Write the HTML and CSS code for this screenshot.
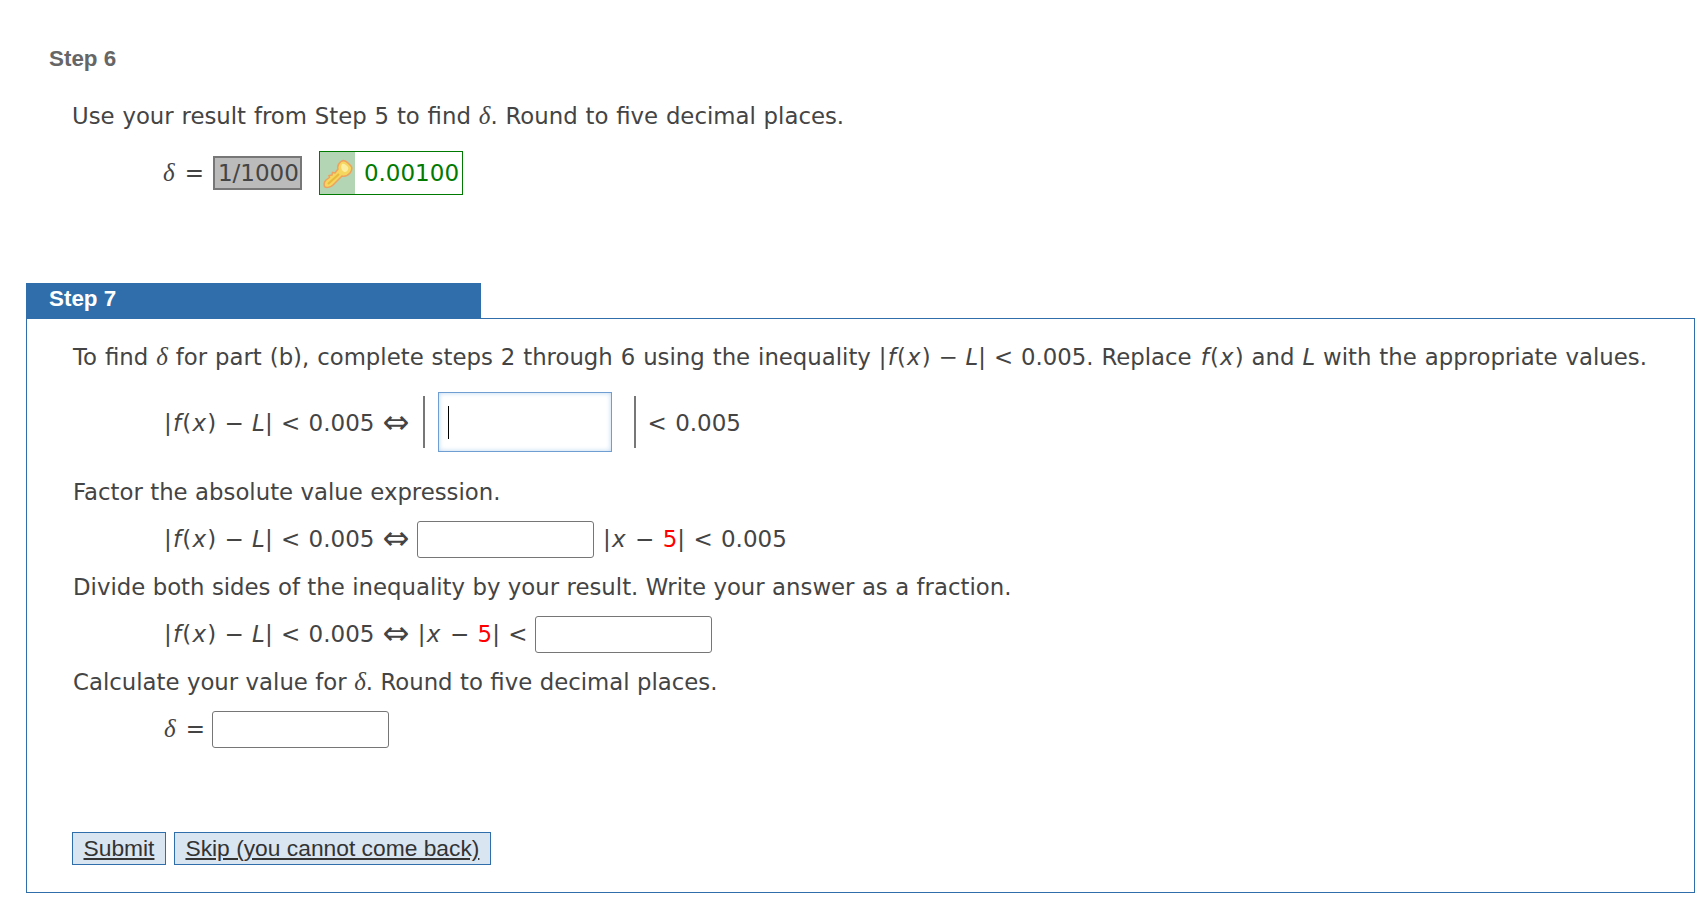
FILE: index.html
```html
<!DOCTYPE html>
<html lang="en">
<head>
    <meta charset="UTF-8">
    <title>Step 7</title>
    <link rel="stylesheet" href="styles.css">
</head>
<body>
    <section class="past-step">
        <div class="step-title">Step 6</div>
        <p class="text wide">Use your result from Step 5 to find <i class="greek">&delta;</i>. Round to five decimal places.</p>
        <div class="math-row answer-row">
            <i class="greek">&delta;</i><span class="eq">=</span>
            <span class="given">1/1000</span>
            <span class="key-box">
                <span class="key-cell">
                    <svg width="31" height="31" viewBox="0 0 31 31">
                        <path d="M19 3.500C21 2 24 3 26 5L29 8C30.500 10 29.500 13 28 15C26 17.500 22.500 18.500 20 18L11 27C9 29 5 30 3 29C1.500 27.500 2 24 4 22L7.500 19.500L7 17.500L10 17L10.500 14.500L13 15L16 11C15 8 16.500 5.500 19 3.500Z" fill="#f5d65e" stroke="#eda35e" stroke-width="1.500"/>
                        <path d="M20 6C22 5 24 7 26 9C27 11 25 14 23 14C20 14 18 9 20 6Z" fill="#fbeea0"/>
                        <path d="M17 16L6 26" fill="none" stroke="#e8b93a" stroke-width="2"/>
                    </svg>
                </span>
                <span class="key-value">0.00100</span>
            </span>
        </div>
    </section>

    <div class="step-tab">Step 7</div>
    <section class="panel">
        <p class="text wider">To find <i class="greek">&delta;</i> for part (b), complete steps 2 through 6 using the inequality |<i class="var">f</i>(<i class="var">x</i>) &minus; <i>L</i>| &lt; 0.005. Replace <i class="var">f</i>(<i class="var">x</i>) and <i>L</i> with the appropriate values.</p>

        <div class="math-row big-row">
            <span class="big-text">|<i class="var">f</i>(<i class="var">x</i>) &minus; <i>L</i>| &lt; 0.005 <span class="arrow">&hArr;</span></span>
            <span class="abs-bar bar-left"></span>
            <span class="focus-wrap">
                <input class="blank focused" type="text">
                <span class="caret"></span>
            </span>
            <span class="abs-bar bar-right"></span>
            <span class="big-text">&lt; 0.005</span>
        </div>

        <p class="text">Factor the absolute value expression.</p>
        <div class="math-row">
            <span>|<i class="var">f</i>(<i class="var">x</i>) &minus; <i>L</i>| &lt; 0.005 <span class="arrow">&hArr;</span></span>
            <input class="blank" type="text">
            <span>|<i class="var">x</i> &minus; <span class="red">5</span>| &lt; 0.005</span>
        </div>

        <p class="text">Divide both sides of the inequality by your result. Write your answer as a fraction.</p>
        <div class="math-row">
            <span>|<i class="var">f</i>(<i class="var">x</i>) &minus; <i>L</i>| &lt; 0.005 <span class="arrow">&hArr;</span> |<i class="var">x</i> &minus; <span class="red">5</span>| &lt;</span>
            <input class="blank" type="text">
        </div>

        <p class="text">Calculate your value for <i class="greek">&delta;</i>. Round to five decimal places.</p>
        <div class="math-row">
            <i class="greek">&delta;</i><span class="eq">=</span>
            <input class="blank" type="text">
        </div>

        <div class="buttons">
            <button class="btn" type="button">Submit</button>
            <button class="btn" type="button">Skip (you cannot come back)</button>
        </div>
    </section>
</body>
</html>
```

FILE: styles.css
```css
body {
    margin: 0;
    background-color: #fff;
    color: #444;
    font-family: "DejaVu Sans", sans-serif;
    font-size: 23px;
}

.past-step {
    padding: 42px 0 0 49px;
    height: 283px;
    box-sizing: border-box;
}

.step-title {
    font-family: "Liberation Sans", sans-serif;
    font-weight: bold;
    font-size: 22.4px;
    line-height: 34px;
    color: #666;
}

.text {
    margin: 0;
    line-height: 34px;
    font-size: 22.8px;
    word-spacing: 0.2px;
}

.wide {
    word-spacing: 0.6px;
}

.wider {
    word-spacing: 0.7px;
}

.past-step .text {
    margin: 23px 0 0 23px;
}

.greek {
    font-family: "Liberation Serif", serif;
    font-size: 25px;
}

.math-row {
    display: flex;
    align-items: center;
    margin-left: 91px;
    height: 38px;
    white-space: pre;
    word-spacing: 1px;
}

.answer-row {
    margin: 18px 0 0 114px;
    height: 44px;
}

.eq {
    margin: 0 9px 0 10px;
}

.given {
    background-color: #bbb;
    border: 2px solid #777;
    height: 34px;
    box-sizing: border-box;
    line-height: 30px;
    padding: 0 3px;
    width: 89px;
}

.key-box {
    display: flex;
    margin-left: 17px;
    width: 144px;
    height: 44px;
    box-sizing: border-box;
    border: 1px solid #007a00;
    color: #007a00;
}

.key-cell {
    width: 35px;
    background-color: #b3d5b3;
    display: flex;
    align-items: center;
    justify-content: center;
}

.key-value {
    padding-left: 9px;
    line-height: 42px;
}

.step-tab {
    margin-left: 26px;
    width: 455px;
    height: 35px;
    box-sizing: border-box;
    padding-left: 23px;
    background-color: #2f6eaa;
    color: #fff;
    font-family: "Liberation Sans", sans-serif;
    font-weight: bold;
    font-size: 22.4px;
    line-height: 32px;
}

.panel {
    margin-left: 26px;
    width: 1669px;
    height: 575px;
    box-sizing: border-box;
    border: 1px solid #2f6eaa;
    padding: 21px 46px 0;
}

.panel i {
    font-family: "DejaVu Sans", sans-serif;
}

.panel i.greek {
    font-family: "Liberation Serif", serif;
}

.var {
    margin: 0 1.2px;
}

.arrow {
    font-size: 32px;
    line-height: 0;
    vertical-align: -2px;
}

.red {
    color: #f00;
}

.panel .text + .math-row {
    margin-top: 11px;
    margin-bottom: 12px;
}

.panel .text + .big-row {
    height: 60px;
    margin-top: 18px;
    margin-bottom: 23px;
}

.big-text {
    padding-top: 2px;
}

.blank {
    width: 177px;
    height: 37px;
    box-sizing: border-box;
    border: 1px solid #767676;
    border-radius: 3px;
    margin: 0 9px 0 7.5px;
    background-color: #fff;
    outline: none;
    padding: 0;
}

.eq + .blank {
    margin-left: -1.500px;
}

.focus-wrap {
    position: relative;
    display: flex;
}

.focused {
    width: 174px;
    height: 60px;
    margin: 0 22px 0 13px;
    border: 1px solid #6f9fd2;
    border-radius: 0;
    box-shadow: inset 0 0 5px #bcd6f0;
}

.caret {
    position: absolute;
    left: 23px;
    top: 14px;
    width: 1.5px;
    height: 33px;
    background-color: #000;
}

.abs-bar {
    width: 2px;
    height: 52px;
    background-color: #777;
}

.bar-left {
    margin-left: 13px;
}

.bar-right {
    margin-right: 12px;
}

.buttons {
    display: flex;
    gap: 8px;
    margin: 84px 0 0 -1px;
}

.btn {
    height: 33px;
    box-sizing: border-box;
    border: 1px solid #2f6eaa;
    background-color: #d9e5f1;
    color: #333;
    font-family: "Liberation Sans", sans-serif;
    font-size: 22.8px;
    text-decoration: underline;
    padding: 0 10.5px;
}
```
